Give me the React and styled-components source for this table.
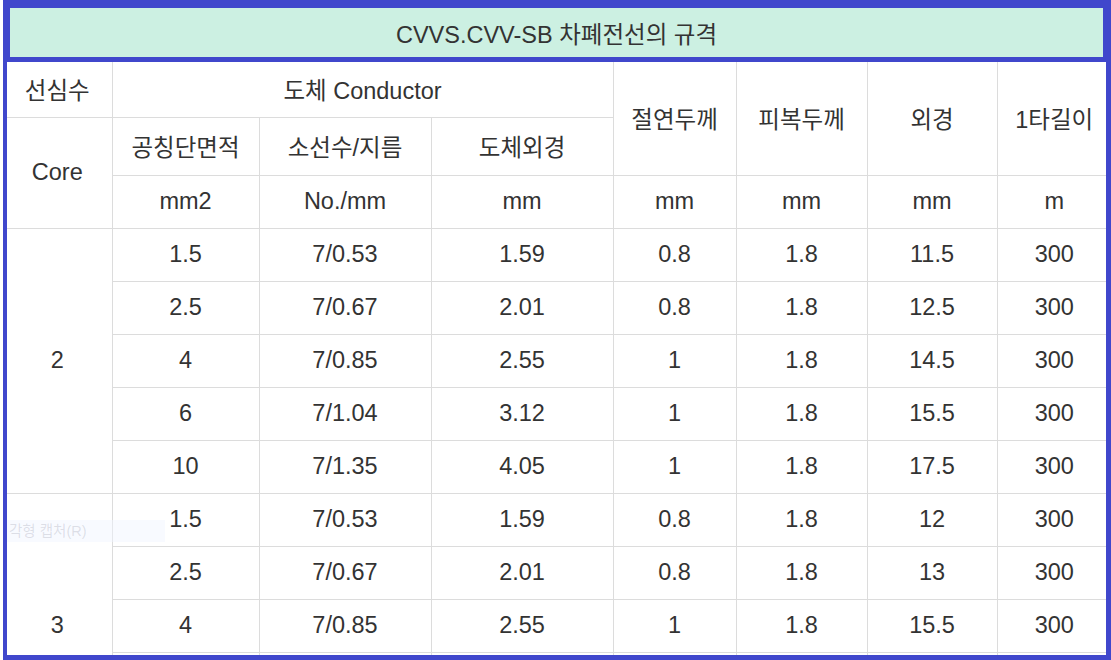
import React from 'react';
import styled, { createGlobalStyle } from 'styled-components';

const GlobalStyle = createGlobalStyle`
  html, body {
    margin: 0;
    padding: 0;
    background: #fff;
  }
  body {
    font-family: "Liberation Sans", Arial, "Noto Sans CJK KR", sans-serif;
    color: #333;
  }
`;

const Frame = styled.div`
  position: relative;
  box-sizing: border-box;
  margin-left: 3px;
  width: 1108px;
  height: 660px;
  overflow: hidden;
  background: #4047cc;
  border-style: solid;
  border-color: #4047cc;
  border-width: 5px 5px 5px 4px;
  display: flex;
  flex-direction: column;
`;

const Title = styled.div`
  flex: 0 0 49px;
  margin: 3px 3px 5px 3px;
  background: #ccf0e2;
  display: flex;
  align-items: center;
  justify-content: center;
  font-size: 23.5px;
  color: #333;
`;

const Table = styled.table`
  width: 1099px;
  table-layout: fixed;
  border-collapse: collapse;
  border-style: hidden;
  background: #fff;
  font-size: 23.5px;
`;

const Row = styled.tr`
  height: ${p => p.h || 53}px;
`;

const Cell = styled.td`
  border: 1px solid #dcdcdc;
  padding: 0;
  padding-left: ${p => (p.edge === 'right' ? 5 : 0)}px;
  padding-right: ${p => (p.edge === 'left' ? 4 : 0)}px;
  text-align: center;
  vertical-align: middle;
  color: #333;
  white-space: nowrap;
`;

const CaptureHint = styled.div`
  position: absolute;
  left: 0;
  top: 515px;
  width: 156px;
  height: 22px;
  background: rgba(240, 244, 255, 0.45);
  color: rgba(120, 125, 145, 0.22);
  font-size: 14.5px;
  line-height: 22px;
  padding-left: 2px;
  white-space: nowrap;
`;

const cols = [105, 147, 172, 182, 123, 131, 130, 109];

const groups = [
  {
    core: '2',
    rows: [
      ['1.5', '7/0.53', '1.59', '0.8', '1.8', '11.5', '300'],
      ['2.5', '7/0.67', '2.01', '0.8', '1.8', '12.5', '300'],
      ['4', '7/0.85', '2.55', '1', '1.8', '14.5', '300'],
      ['6', '7/1.04', '3.12', '1', '1.8', '15.5', '300'],
      ['10', '7/1.35', '4.05', '1', '1.8', '17.5', '300'],
    ],
  },
  {
    core: '3',
    rows: [
      ['1.5', '7/0.53', '1.59', '0.8', '1.8', '12', '300'],
      ['2.5', '7/0.67', '2.01', '0.8', '1.8', '13', '300'],
      ['4', '7/0.85', '2.55', '1', '1.8', '15.5', '300'],
      ['', '', '', '', '', '', ''],
      ['', '', '', '', '', '', ''],
    ],
  },
];

export default function App() {
  return (
    <>
      <GlobalStyle />
      <Frame>
        <Title>CVVS.CVV-SB 차폐전선의 규격</Title>
        <Table>
          <colgroup>
            {cols.map((w, i) => <col key={i} style={{ width: w }} />)}
          </colgroup>
          <tbody>
            <Row h={55}>
              <Cell edge="left">선심수</Cell>
              <Cell colSpan={3}>도체 Conductor</Cell>
              <Cell rowSpan={2}>절연두께</Cell>
              <Cell rowSpan={2}>피복두께</Cell>
              <Cell rowSpan={2}>외경</Cell>
              <Cell rowSpan={2} edge="right">1타길이</Cell>
            </Row>
            <Row h={58}>
              <Cell rowSpan={2} edge="left">Core</Cell>
              <Cell>공칭단면적</Cell>
              <Cell>소선수/지름</Cell>
              <Cell>도체외경</Cell>
            </Row>
            <Row>
              <Cell>mm2</Cell>
              <Cell>No./mm</Cell>
              <Cell>mm</Cell>
              <Cell>mm</Cell>
              <Cell>mm</Cell>
              <Cell>mm</Cell>
              <Cell edge="right">m</Cell>
            </Row>
            {groups.map(g =>
              g.rows.map((r, i) => (
                <Row key={g.core + i}>
                  {i === 0 && (
                    <Cell rowSpan={g.rows.length} edge="left">{g.core}</Cell>
                  )}
                  {r.map((v, j) => (
                    <Cell key={j} edge={j === r.length - 1 ? 'right' : undefined}>
                      {v}
                    </Cell>
                  ))}
                </Row>
              ))
            )}
          </tbody>
        </Table>
        <CaptureHint>각형 캡처(R)</CaptureHint>
      </Frame>
    </>
  );
}
